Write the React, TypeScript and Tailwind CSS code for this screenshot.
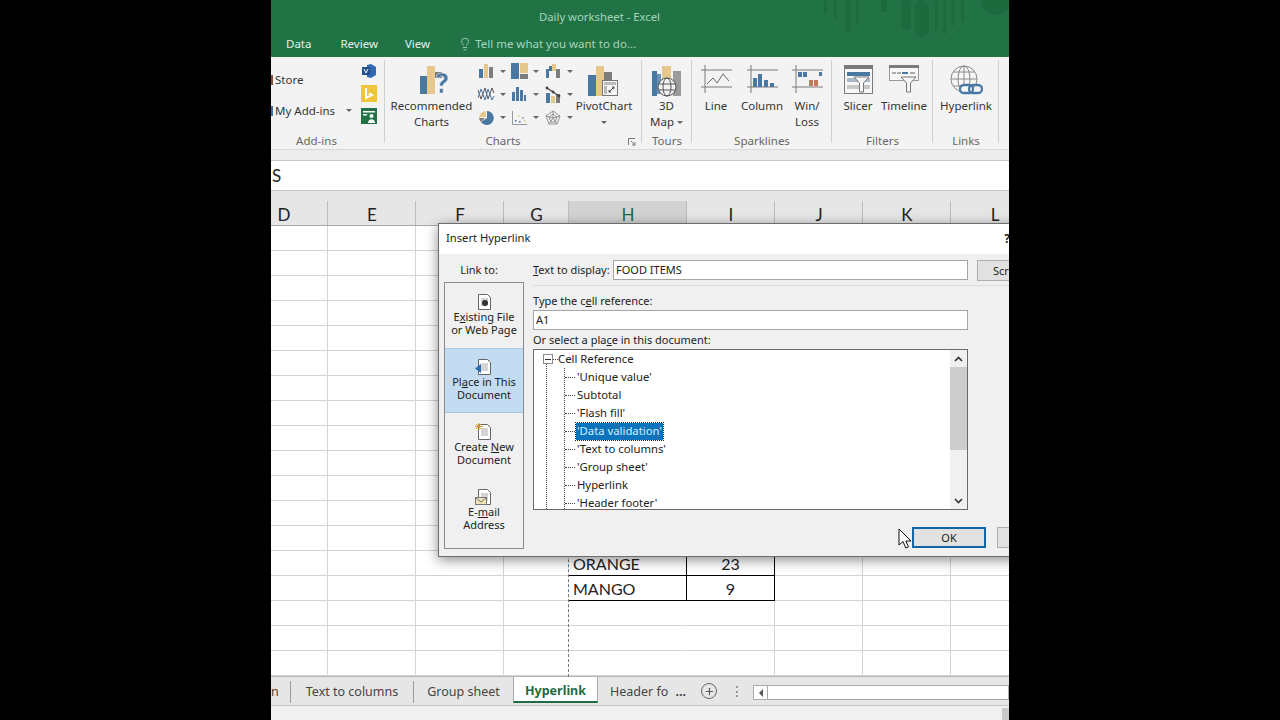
import type { ReactNode } from 'react';
import { Lightbulb, Plus } from 'lucide-react';

const BLUE = '#4a78a3';
const TAN = '#e6c88c';
const GRAY = '#7d7d7d';

const columns = [
  { name: 'D', w: 'w-[88px]' },
  { name: 'E', w: 'w-[88px]' },
  { name: 'F', w: 'w-[88px]' },
  { name: 'G', w: 'w-[65px]' },
  { name: 'H', w: 'w-[118px]' },
  { name: 'I', w: 'w-[88px]' },
  { name: 'J', w: 'w-[88px]' },
  { name: 'K', w: 'w-[88px]' },
  { name: 'L', w: 'w-[88px]' },
];

const rows = Array.from({ length: 18 }, (_, i) => i);

const treeItems = [
  "'Unique value'",
  'Subtotal',
  "'Flash fill'",
  "'Data validation'",
  "'Text to columns'",
  "'Group sheet'",
  'Hyperlink',
  "'Header footer'",
];

function Caret() {
  return <span className="w-0 h-0 border-x-[3px] border-x-transparent border-t-[3px] border-t-[#666] inline-block" />;
}

function BarsIcon() {
  return (
    <svg width="16" height="16" viewBox="0 0 16 16">
      <rect x="1" y="6" width="4" height="9" fill={BLUE} />
      <rect x="6" y="1" width="4" height="14" fill={TAN} />
      <rect x="11" y="4" width="4" height="11" fill={GRAY} />
    </svg>
  );
}

function TreemapIcon() {
  return (
    <svg width="18" height="18" viewBox="0 0 18 18">
      <rect x="1" y="1" width="8" height="16" fill={BLUE} />
      <rect x="10" y="1" width="8" height="10" fill={TAN} />
      <rect x="10" y="12" width="8" height="5" fill={GRAY} />
    </svg>
  );
}

function WaterfallIcon() {
  return (
    <svg width="16" height="16" viewBox="0 0 16 16">
      <rect x="1" y="6" width="3" height="9" fill={BLUE} />
      <rect x="4" y="3" width="3" height="5" fill={BLUE} />
      <rect x="7" y="1" width="4" height="7" fill={TAN} />
      <rect x="11" y="6" width="4" height="9" fill={GRAY} />
    </svg>
  );
}

function LineChartIcon() {
  return (
    <svg width="18" height="16" viewBox="0 0 18 16" fill="none" strokeWidth="1">
      <path d="M1 4l3 9 4-11 3 11 4-11 2 5" stroke="#555" />
      <path d="M1 12l3-9 4 11 3-11 4 11 2-4" stroke={BLUE} />
    </svg>
  );
}

function StatBarsIcon() {
  return (
    <svg width="16" height="16" viewBox="0 0 16 16">
      <rect x="1" y="6" width="3" height="9" fill={BLUE} />
      <rect x="5" y="1" width="3" height="14" fill={BLUE} />
      <rect x="9" y="4" width="3" height="11" fill={BLUE} />
      <rect x="13" y="9" width="2" height="6" fill={BLUE} />
    </svg>
  );
}

function ComboIcon() {
  return (
    <svg width="16" height="17" viewBox="0 0 16 17" fill="none">
      <rect x="1" y="7" width="4" height="10" fill={BLUE} />
      <rect x="6" y="10" width="4" height="7" fill={TAN} />
      <rect x="11" y="8" width="4" height="9" fill={GRAY} />
      <path d="M2 2l6 4 6 4" stroke="#444" strokeWidth="1.3" />
      <circle cx="2" cy="2" r="1.4" fill="#444" />
      <circle cx="8" cy="6" r="1.4" fill="#444" />
      <circle cx="14" cy="10" r="1.4" fill="#444" />
    </svg>
  );
}

function PieIcon() {
  return (
    <svg width="16" height="16" viewBox="0 0 16 16">
      <path d="M9 1a7 7 0 1 1-6 11l6-4z" fill={BLUE} />
      <path d="M8 1v6H1a7 7 0 0 1 7-6z" fill={TAN} />
      <path d="M1 8h6l-4 4a7 7 0 0 1-2-4z" fill={GRAY} />
    </svg>
  );
}

function ScatterIcon() {
  return (
    <svg width="16" height="16" viewBox="0 0 16 16" fill="none">
      <path d="M1.5 1v13.5H16" stroke="#999" />
      <rect x="4" y="10" width="1.5" height="1.5" fill={BLUE} />
      <rect x="7" y="5" width="1.5" height="1.5" fill={TAN} />
      <rect x="8" y="11" width="1.5" height="1.5" fill={BLUE} />
      <rect x="11" y="7" width="1.5" height="1.5" fill="#888" />
      <rect x="13" y="10" width="1.5" height="1.5" fill={TAN} />
    </svg>
  );
}

function RadarIcon() {
  return (
    <svg width="16" height="16" viewBox="0 0 16 16" fill="none" stroke="#888" strokeWidth="0.9">
      <path d="M8 1l7 5-3 8H4L1 6z" />
      <path d="M8 4l4 3-2 5H6L4 7z" />
      <path d="M8 1v7M15 6L8 8M12 14L8 8M4 14l4-6M1 6l7 2" />
    </svg>
  );
}

function SmallChart({ children }: { children: ReactNode }) {
  return (
    <div className="h-full flex items-center gap-[4px]">
      <div className="w-[21px] flex justify-center">{children}</div>
      <Caret />
    </div>
  );
}

function RecommendedIcon() {
  return (
    <svg width="32" height="32" viewBox="0 0 32 32">
      <rect x="4" y="11" width="7" height="18" fill={BLUE} />
      <rect x="11" y="1" width="8" height="28" fill={TAN} />
      <rect x="19" y="7" width="7" height="6" fill={GRAY} />
      <path
        d="M20 11.500c1-2.500 3.500-3.500 6-3.500 3.500 0 6 2 6 5 0 2.500-1.500 3.800-3 4.800-1.300.9-1.800 1.500-1.800 3.200h-3.700c0-2.800.8-4 2.500-5.200 1.200-.8 2-1.500 2-2.600 0-1.200-1-2-2.300-2-1.500 0-2.400.8-3 2.200zM23.500 23.500h3.700V28h-3.700z"
        fill={BLUE}
        stroke="#f3f3f3"
        strokeWidth="0.6"
      />
    </svg>
  );
}

function PivotIcon() {
  return (
    <svg width="32" height="32" viewBox="0 0 32 32" fill="none">
      <rect x="0" y="10" width="8" height="21" fill={BLUE} />
      <rect x="8" y="1" width="8" height="30" fill={TAN} />
      <rect x="16" y="7" width="8" height="10" fill={GRAY} />
      <rect x="14.5" y="15.5" width="15" height="15" fill="#f5f5f5" stroke="#777" />
      <rect x="16" y="17" width="12" height="3" fill="#bbb" />
      <rect x="16" y="21" width="3" height="8" fill="#bbb" />
      <path d="M21 27l5-5M24 22h2v2M21 25v2h2" stroke="#444" />
    </svg>
  );
}

function MapIcon() {
  return (
    <svg width="32" height="33" viewBox="0 0 32 33" fill="none">
      <rect x="1" y="6" width="5" height="25" fill={BLUE} />
      <rect x="6" y="9" width="4" height="20" fill="#6f93b5" />
      <rect x="11" y="1" width="9" height="16" fill={TAN} />
      <rect x="22" y="6" width="8" height="25" fill="#9b9b9b" />
      <circle cx="16" cy="22" r="9" fill="#f3f3f3" stroke="#555" />
      <ellipse cx="16" cy="22" rx="4" ry="9" stroke="#555" />
      <path d="M7 19h18M7 25h18" stroke="#555" />
    </svg>
  );
}

function SparkFrame({ children }: { children: ReactNode }) {
  return (
    <svg width="31" height="28" viewBox="0 0 31 28" fill="none">
      <path d="M4 0v28M0 5h31M0 22h31" stroke="#7b7b7b" />
      {children}
    </svg>
  );
}

function SlicerIcon() {
  return (
    <svg width="29" height="29" viewBox="0 0 29 29" fill="none">
      <rect x="0.5" y="0.5" width="28" height="28" fill="#f7f7f7" stroke="#7b7b7b" />
      <rect x="0" y="0" width="29" height="4" fill="#7b7b7b" />
      <rect x="3" y="7" width="23" height="4" fill={BLUE} />
      <rect x="3" y="13" width="23" height="4" fill="#a9b9c8" />
      <rect x="3" y="20" width="23" height="4" fill="#c8c8c8" />
      <path d="M10 12h15l-5.500 6v9h-4v-9z" fill="#f7f7f7" stroke="#777" />
    </svg>
  );
}

function TimelineIcon() {
  return (
    <svg width="30" height="28" viewBox="0 0 30 28" fill="none">
      <rect x="0.500" y="0.500" width="29" height="15" fill="#f7f7f7" stroke="#999" />
      <rect x="0" y="0" width="30" height="3" fill="#7b7b7b" />
      <rect x="3" y="7" width="4" height="2" fill="#aaa" />
      <rect x="8" y="7" width="4" height="2" fill="#aaa" />
      <rect x="13" y="7" width="6" height="2" fill={BLUE} />
      <rect x="21" y="7" width="5" height="2" fill="#aaa" />
      <path d="M12 12h15l-5.500 6v9h-4v-9z" fill="#f7f7f7" stroke="#777" />
    </svg>
  );
}

function HyperlinkIcon() {
  return (
    <svg width="33" height="33" viewBox="0 0 33 33" fill="none">
      <circle cx="14" cy="14" r="13" fill="#f7f7f7" stroke="#8a8a8a" />
      <ellipse cx="14" cy="14" rx="6" ry="13" stroke="#8a8a8a" />
      <path d="M14 1v26M1 14h26M3 7h22M3 21h22" stroke="#8a8a8a" />
      <rect x="10" y="20" width="13" height="8" rx="4" fill="#f7f7f7" stroke={BLUE} strokeWidth="2.300" />
      <rect x="19" y="20" width="13" height="8" rx="4" fill="none" stroke={BLUE} strokeWidth="2.300" />
    </svg>
  );
}

function BigButton({ icon, lines, w, caret, className = '' }: { icon: ReactNode; lines: ReactNode[]; w: string; caret?: boolean; className?: string }) {
  return (
    <div className={`${w} flex flex-col items-center pt-[8px] shrink-0 ${className}`}>
      <div className="h-[33px] flex items-start justify-center">{icon}</div>
      {lines.map((l, i) => (
        <span key={i} className="leading-[16px] whitespace-nowrap">{l}</span>
      ))}
      {caret && <div className="h-[16px] flex items-center"><Caret /></div>}
    </div>
  );
}

function Group({ label, w, children, right, labelClass = '' }: { label: string; w: string; children: ReactNode; right?: ReactNode; labelClass?: string }) {
  return (
    <div className={`${w} h-full shrink-0 flex flex-col relative`}>
      <div className="h-[76px] flex">{children}</div>
      <div className={`h-[16px] leading-[16px] text-center text-[#666] ${labelClass}`}>{label}</div>
      {right}
      <div className="absolute right-0 top-[3px] bottom-[6px] w-px bg-[#d0d0d0]" />
    </div>
  );
}

function DocIcon({ children }: { children?: ReactNode }) {
  return (
    <svg width="18" height="18" viewBox="0 0 18 18" fill="none">
      <path d="M3.500 1.500h9l3 3v12h-12z" fill="#fff" stroke="#666" />
      <path d="M6 6h7M6 8h7M6 10h7M6 12h7" stroke="#aaa" />
      {children}
    </svg>
  );
}

function LinkItem({ icon, lines, selected }: { icon: ReactNode; lines: ReactNode[]; selected?: boolean }) {
  return (
    <div className={`h-[65px] flex flex-col items-center leading-[13px] ${selected ? 'pt-[9px] bg-[#c4dcf1] border-y border-[#a5c8e6]' : 'pt-[10px]'}`}>
      <div className="h-[16px] mb-[1px]">{icon}</div>
      {lines.map((l, i) => (
        <span key={i} className="whitespace-nowrap">{l}</span>
      ))}
    </div>
  );
}

function InsertHyperlinkDialog() {
  return (
    <div className="absolute left-[167px] top-[22px] w-[600px] h-[334px] border border-[#6d6d6d] bg-[#f0f0f0] shadow-[0_3px_12px_rgba(0,0,0,0.45)] text-[11px] text-[#222] font-['Noto_Sans',sans-serif]">
      <div className="h-[30px] bg-white flex items-center justify-between pl-[7px] pr-[27px] pb-[1px]">
        <span className="text-[11.200px]">Insert Hyperlink</span>
        <span className="text-[12px] font-bold">?</span>
      </div>
      <div className="flex pl-[5px]">
        <div className="w-[80px] shrink-0">
          <div className="h-[28px] pt-[5px] pr-[10px] flex items-center justify-center">Link to:</div>
          <div className="h-[267px] border border-[#8a8a8a] bg-[#f0f0f0]">
            <LinkItem
              icon={
                <DocIcon>
                  <circle cx="10" cy="10" r="3" fill="#333" />
                </DocIcon>
              }
              lines={[<>E<u>x</u>isting File</>, 'or Web Page']}
            />
            <LinkItem
              selected
              icon={
                <DocIcon>
                  <path d="M6 6L0 10.500 6 15z" fill="#2a6db0" />
                </DocIcon>
              }
              lines={[<>Pl<u>a</u>ce in This</>, 'Document']}
            />
            <LinkItem
              icon={
                <DocIcon>
                  <path d="M4 0v7M0 3.500h8M1 1l5 5M6 1L1 6" stroke="#e0a030" />
                </DocIcon>
              }
              lines={[<>Create <u>N</u>ew</>, 'Document']}
            />
            <LinkItem
              icon={
                <DocIcon>
                  <rect x="0.500" y="9.500" width="11" height="7" fill="#f0e4b8" stroke="#777" />
                  <path d="M1 10l5 4 5-4" stroke="#777" />
                </DocIcon>
              }
              lines={[<>E-<u>m</u>ail</>, 'Address']}
            />
          </div>
        </div>
        <div className="ml-[9px] flex-1 min-w-0">
          <div className="h-[32px] pt-[6px] flex items-start border-b border-[#dcdcdc] w-[480px]">
            <span className="w-[80px] shrink-0 h-[20px] leading-[20px] whitespace-nowrap"><u>T</u>ext to display:</span>
            <div className="w-[355px] shrink-0 h-[20px] bg-white border border-[#a5a5a5] leading-[18px] pl-[2px]">FOOD ITEMS</div>
            <div className="ml-[9px] w-[60px] shrink-0 h-[21px] bg-[#e1e1e1] border border-[#adadad] leading-[19px] pl-[15px] overflow-hidden whitespace-nowrap">ScreenTip...</div>
          </div>
          <div className="h-[24px] leading-[30px]">Type the c<u>e</u>ll reference:</div>
          <div className="w-[435px] h-[20px] bg-white border border-[#a5a5a5] leading-[18px] pl-[2px]">A1</div>
          <div className="h-[19px] leading-[19px]">Or select a pla<u>c</u>e in this document:</div>
          <div className="relative w-[435px] h-[161px] bg-white border border-[#6a6a6a] overflow-hidden text-[11.300px]">
            <div className="absolute left-[12px] top-[14px] bottom-0 border-l border-dotted border-[#444]" />
            <div className="absolute left-[30px] top-[18px] bottom-0 border-l border-dotted border-[#444]" />
            <div className="h-[18px] flex items-center pl-[9px]">
              <span className="w-[10px] h-[10px] border border-[#8a8a8a] bg-white flex items-center justify-center">
                <span className="w-[6px] h-px bg-[#333]" />
              </span>
              <span className="w-[5px] border-t border-dotted border-[#444]" />
              <span>Cell Reference</span>
            </div>
            {treeItems.map((t, i) => (
              <div key={t} className="h-[18px] flex items-center pl-[31px]">
                <span className="w-[10px] border-t border-dotted border-[#444]" />
                <span className={`px-[1px] h-[17px] leading-[16px] whitespace-nowrap ml-[1px] ${i === 3 ? 'bg-[#0b74bd] text-[#d6edff] outline-1 outline-dotted outline-[#222]' : ''}`}>{t}</span>
              </div>
            ))}
            <div className="absolute right-0 top-0 bottom-0 w-[17px] bg-[#f0f0f0] flex flex-col items-center">
              <div className="h-[17px] flex items-center">
                <svg width="9" height="6" viewBox="0 0 9 6" fill="none"><path d="M1 5l3.500-3.500L8 5" stroke="#333" strokeWidth="1.600" /></svg>
              </div>
              <div className="w-full h-[83px] bg-[#cdcdcd]" />
              <div className="flex-1" />
              <div className="h-[17px] flex items-center">
                <svg width="9" height="6" viewBox="0 0 9 6" fill="none"><path d="M1 1l3.500 3.500L8 1" stroke="#333" strokeWidth="1.600" /></svg>
              </div>
            </div>
          </div>
          <div className="flex mt-[17px] pl-[379px]">
            <div className="w-[74px] h-[21px] shrink-0 bg-[#e1e1e1] border-2 border-[#0f67a5] text-center leading-[17px]">OK</div>
            <div className="w-[74px] h-[21px] shrink-0 ml-[11px] bg-[#e1e1e1] border border-[#adadad]" />
          </div>
        </div>
      </div>
    </div>
  );
}

export default function App() {
  return (
    <div className="w-[1280px] h-[720px] bg-black flex justify-center overflow-hidden">
      <div className="relative w-[738px] h-[720px] overflow-hidden bg-white flex flex-col font-['Noto_Sans',sans-serif] text-[11.500px] text-[#333]">
        <div className="relative h-[57px] bg-[#217346] shrink-0 overflow-hidden">
          <svg className="absolute right-0 top-0" width="190" height="40" viewBox="0 0 190 40" fill="#1d6a3f">
            <rect x="5" y="0" width="3" height="14" />
            <rect x="15" y="0" width="3" height="18" />
            <rect x="27" y="0" width="4" height="32" />
            <rect x="37" y="0" width="3" height="24" />
            <rect x="62" y="0" width="6" height="12" />
            <rect x="82" y="0" width="10" height="30" rx="5" />
            <rect x="96" y="0" width="14" height="37" rx="7" />
            <rect x="116" y="0" width="3" height="30" />
            <rect x="124" y="0" width="3" height="34" />
            <rect x="132" y="0" width="3" height="26" />
            <rect x="142" y="0" width="3" height="22" />
            <circle cx="177" cy="0" r="15" />
          </svg>
          <div className="absolute left-[268px] top-[8px] text-[11.300px] leading-[18px] text-[#a6d3b9] whitespace-nowrap">Daily worksheet - Excel</div>
          <div className="absolute left-[15px] top-[35px] flex items-center leading-[18px] text-[#e4f1ea]">
            <span>Data</span>
            <span className="ml-[29px]">Review</span>
            <span className="ml-[27px]">View</span>
            <Lightbulb className="ml-[28px] w-[14px] h-[16px] text-[#a6d3b9]" strokeWidth={1.500} />
            <span className="ml-[3px] text-[#a6d3b9]">Tell me what you want to do...</span>
          </div>
        </div>

        <div className="h-[93px] shrink-0 bg-[#f3f3f3] border-b border-[#d9d9d9] flex">
          <Group label="Add-ins" w="w-[114px]" labelClass="pr-[23px]">
            <div className="w-[90px] flex flex-col pt-[11px]">
              <div className="h-[23px] flex items-center">
                <span className="w-[2px] h-[10px] bg-[#8a4b32] mr-[2px]" />Store
              </div>
              <div className="h-[23px] mt-[8px] flex items-center whitespace-nowrap">
                <span className="w-[2px] h-[10px] bg-[#3d6f9e] mr-[2px]" />My Add-ins
                <span className="ml-[11px] flex"><Caret /></span>
              </div>
            </div>
            <div className="flex flex-col items-start pt-[6px] gap-[6px]">
              <svg width="16" height="16" viewBox="0 0 16 16">
                <path d="M6 2l4-1 5 3v8l-5 3-4-1z" fill="#2f6ab0" />
                <rect x="1" y="4" width="8" height="8" fill="#234f8c" />
                <path d="M3 6l2 4 2-4" stroke="#fff" fill="none" />
              </svg>
              <svg width="16" height="17" viewBox="0 0 16 17">
                <rect width="16" height="17" fill="#f0c53e" />
                <path d="M5 3v10l6-3-3-1.500" stroke="#fff" strokeWidth="2" fill="none" />
              </svg>
              <svg width="16" height="16" viewBox="0 0 16 16">
                <rect width="16" height="16" fill="#217346" />
                <rect x="2" y="3" width="12" height="1.500" fill="#fff" />
                <rect x="2" y="6" width="4" height="1.500" fill="#fff" />
                <circle cx="10.500" cy="8" r="2" fill="#fff" />
                <path d="M7 15c0-5 7-5 7 0z" fill="#fff" />
              </svg>
            </div>
          </Group>
          <Group
            label="Charts"
            w="w-[257px]"
            labelClass="pr-[21px]"
            right={
              <svg className="absolute right-[6px] bottom-[3px]" width="8" height="8" viewBox="0 0 8 8" fill="none">
                <path d="M.5 7V.5H7M3 3l4 4M4 7h3V4" stroke="#777" />
              </svg>
            }
          >
            <BigButton icon={<RecommendedIcon />} lines={['Recommended', 'Charts']} w="w-[93px]" className="-mr-[3px]" />
            <div className="grid grid-cols-[33px_34px_34px] grid-rows-[22px_24px_23px] pt-[3px] w-[101px]">
              <SmallChart><BarsIcon /></SmallChart>
              <SmallChart><TreemapIcon /></SmallChart>
              <SmallChart><WaterfallIcon /></SmallChart>
              <SmallChart><LineChartIcon /></SmallChart>
              <SmallChart><StatBarsIcon /></SmallChart>
              <SmallChart><ComboIcon /></SmallChart>
              <SmallChart><PieIcon /></SmallChart>
              <SmallChart><ScatterIcon /></SmallChart>
              <SmallChart><RadarIcon /></SmallChart>
            </div>
            <BigButton icon={<PivotIcon />} lines={['PivotChart']} w="w-[56px]" caret />
          </Group>
          <Group label="Tours" w="w-[50px]">
            <BigButton
              icon={<MapIcon />}
              lines={['3D', <span className="flex items-center gap-[3px]">Map <Caret /></span>]}
              w="w-[49px]"
            />
          </Group>
          <Group label="Sparklines" w="w-[140px]">
            <BigButton
              w="w-[48px]"
              lines={['Line']}
              icon={<SparkFrame><path d="M6 19l6-6 4 5 6-9 6 7" stroke="#666" /></SparkFrame>}
            />
            <BigButton
              w="w-[44px]"
              lines={['Column']}
              icon={
                <SparkFrame>
                  <rect x="6" y="13" width="4" height="9" fill={BLUE} />
                  <rect x="11" y="9" width="4" height="13" fill={BLUE} />
                  <rect x="17" y="15" width="4" height="7" fill={BLUE} />
                  <rect x="23" y="18" width="4" height="4" fill={BLUE} />
                </SparkFrame>
              }
            />
            <BigButton
              w="w-[46px]"
              lines={['Win/', 'Loss']}
              icon={
                <SparkFrame>
                  <rect x="6" y="7" width="4" height="5" fill={BLUE} />
                  <rect x="11" y="7" width="4" height="5" fill={BLUE} />
                  <rect x="17" y="15" width="4" height="6" fill="#c0795a" />
                  <rect x="22" y="15" width="4" height="6" fill="#c0795a" />
                  <rect x="27" y="7" width="3" height="4" fill={BLUE} />
                </SparkFrame>
              }
            />
          </Group>
          <Group label="Filters" w="w-[101px]">
            <BigButton w="w-[52px]" lines={['Slicer']} icon={<SlicerIcon />} />
            <BigButton w="w-[40px]" lines={['Timeline']} icon={<TimelineIcon />} />
          </Group>
          <Group label="Links" w="w-[66px]">
            <BigButton w="w-[66px]" lines={['Hyperlink']} icon={<HyperlinkIcon />} />
          </Group>
        </div>

        <div className="h-[11px] shrink-0 bg-[#ececec] border-b border-[#c6c6c6]" />
        <div className="h-[30px] shrink-0 bg-white border-b border-[#c6c6c6] pl-px text-[17px] leading-[29px] font-['Lato',sans-serif] text-[#222]">S</div>

        <div className="h-[10px] shrink-0 bg-[#e6e6e6]" />
        <div className="-ml-[31px] flex flex-col font-['Lato',sans-serif] text-[#222] shrink-0">
          <div className="flex h-[25px] border-b border-[#a9a9a9]">
            {columns.map(c => (
              <div key={c.name} className={`${c.w} shrink-0 text-center text-[17px] leading-[27px] pl-px border-r border-[#bdbdbd] ${c.name === 'H' ? 'bg-[#d2d2d2] text-[#1c6b41]' : 'bg-[#e6e6e6]'}`}>
                {c.name}
              </div>
            ))}
          </div>
          {rows.map(r => {
            const filled = r === 13 || r === 14;
            return (
              <div key={r} className="flex h-[25px]">
                {columns.map(c => (
                  <div
                    key={c.name}
                    className={`${c.w} shrink-0 h-[25px] border-b text-[16px] leading-[26px] ${filled && (c.name === 'H' || c.name === 'I') ? 'border-b-black' : 'border-b-[#d4d4d4]'} ${c.name === 'H' ? 'pl-[4px] border-r' : 'border-r'} ${filled && (c.name === 'H' || c.name === 'I') ? 'border-r-black' : 'border-r-[#d4d4d4]'} ${c.name === 'I' ? 'text-center' : ''} ${c.name === 'G' || (c.name === 'H' && r >= 15) ? 'border-r-transparent' : ''}`}
                  >
                    {c.name === 'H' && r === 13 && 'ORANGE'}
                    {c.name === 'H' && r === 14 && 'MANGO'}
                    {c.name === 'I' && r === 13 && '23'}
                    {c.name === 'I' && r === 14 && '9'}
                  </div>
                ))}
              </div>
            );
          })}
        </div>

        <div className="h-px shrink-0 bg-[#b5b5b5]" />
        <div className="h-[29px] shrink-0 bg-[#e6e6e6] border-b border-[#c6c6c6] flex items-start text-[12.500px] text-[#444]">
          <div className="w-[20px] h-[22px] mt-[4px] border-r border-[#9a9a9a] leading-[22px] overflow-hidden">n</div>
          <div className="w-[123px] h-[22px] mt-[4px] border-r border-[#9a9a9a] leading-[22px] text-center whitespace-nowrap">Text to columns</div>
          <div className="w-[99px] h-[22px] mt-[4px] leading-[22px] text-center whitespace-nowrap">Group sheet</div>
          <div className="w-[85px] h-[26px] bg-white border-x border-[#aaa] border-b-2 border-b-[#1f6b43] leading-[28px] text-center font-bold text-[#1f6b43] whitespace-nowrap">Hyperlink</div>
          <div className="w-[90px] h-[22px] mt-[4px] pl-[12px] leading-[22px] whitespace-nowrap">Header fo <span className="ml-[4px] font-bold">...</span></div>
          <div className="w-[16px] h-[16px] mt-[6px] ml-[13px] rounded-full border border-[#666] flex items-center justify-center shrink-0">
            <Plus className="w-[11px] h-[11px] text-[#555]" strokeWidth={2.200} />
          </div>
          <div className="w-[2px] h-[11px] mt-[9px] ml-[19px] border-l-2 border-dotted border-[#999] shrink-0" />
          <div className="mt-[8px] ml-[15px] flex-1 h-[15px] bg-white border border-[#aaa] flex">
            <div className="w-[14px] h-full border-r border-[#aaa] flex items-center justify-center">
              <span className="w-0 h-0 border-y-[4px] border-y-transparent border-r-[4px] border-r-[#555]" />
            </div>
          </div>
        </div>
        <div className="flex-1 bg-[#f0f0f0] flex justify-end">
          <div className="w-[7px] h-full mt-[2px] bg-[#c8c8c8]" />
        </div>

        <div className="absolute left-[297px] top-[225px] h-[452px] border-l border-dashed border-l-[#777]" />

        <div className="absolute left-0 top-[201px] w-full">
          <InsertHyperlinkDialog />
        </div>

        <svg className="absolute left-[627px] top-[528px]" width="14" height="22" viewBox="0 0 14 22">
          <path d="M1 1v16l4-3.500 2.800 6.500 2.700-1.200L7.800 13H13z" fill="#fff" stroke="#111" strokeWidth="1" />
        </svg>
      </div>
    </div>
  );
}
